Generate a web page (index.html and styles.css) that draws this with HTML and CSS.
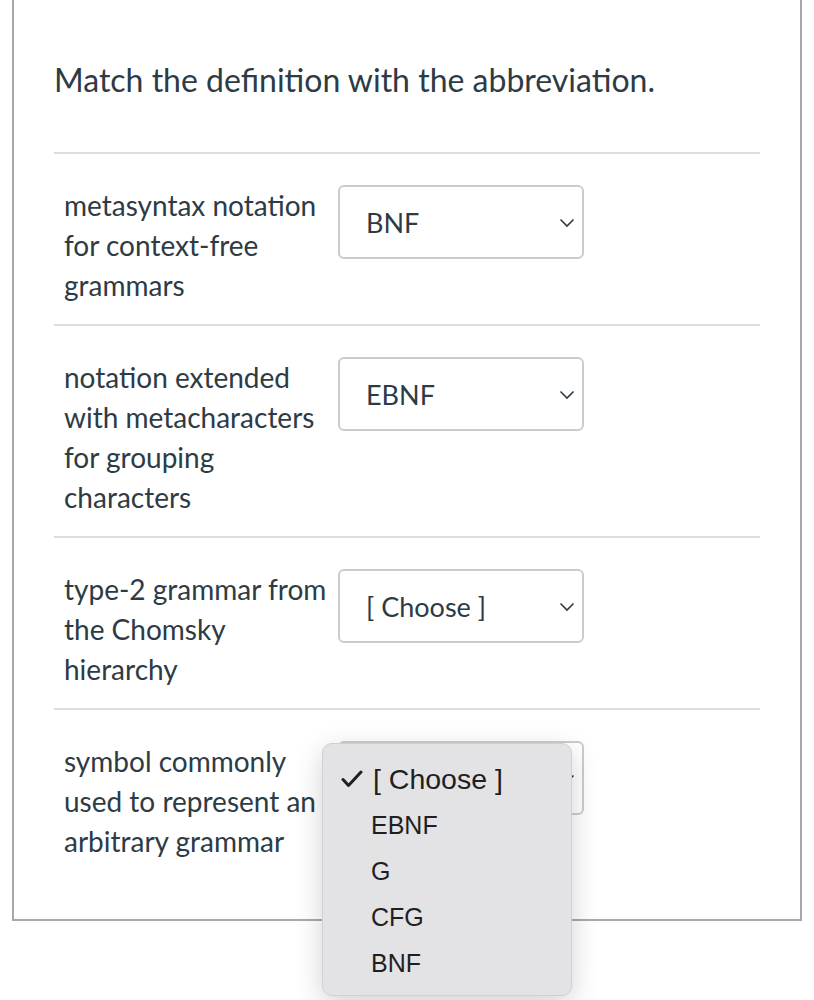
FILE: index.html
```html
<!DOCTYPE html>
<html lang="en">
<head>
    <meta charset="UTF-8">
    <meta name="viewport" content="width=device-width, initial-scale=1.0">
    <title>Matching Question</title>
    <link rel="stylesheet" href="styles.css">
</head>
<body>
    <div class="question">
        <div class="question-text">Match the definition with the abbreviation.</div>

        <div class="answers">
            <div class="answer">
                <div class="answer-label">metasyntax notation for context-free grammars</div>
                <div class="answer-select">
                    <span>BNF</span>
                    <svg class="chevron" width="16" height="10" viewBox="0 0 16 10" fill="none">
                        <path d="M1.5 1.5L8 8L14.5 1.5" stroke="#2D3B45" stroke-width="1.6"/>
                    </svg>
                </div>
            </div>

            <div class="answer">
                <div class="answer-label">notation extended with metacharacters for grouping characters</div>
                <div class="answer-select">
                    <span>EBNF</span>
                    <svg class="chevron" width="16" height="10" viewBox="0 0 16 10" fill="none">
                        <path d="M1.5 1.5L8 8L14.5 1.5" stroke="#2D3B45" stroke-width="1.6"/>
                    </svg>
                </div>
            </div>

            <div class="answer">
                <div class="answer-label">type-2 grammar from the Chomsky hierarchy</div>
                <div class="answer-select">
                    <span>[ Choose ]</span>
                    <svg class="chevron" width="16" height="10" viewBox="0 0 16 10" fill="none">
                        <path d="M1.5 1.5L8 8L14.5 1.5" stroke="#2D3B45" stroke-width="1.6"/>
                    </svg>
                </div>
            </div>

            <div class="answer">
                <div class="answer-label">symbol commonly used to represent an arbitrary grammar</div>
                <div class="answer-select">
                    <span>[ Choose ]</span>
                    <svg class="chevron" width="16" height="10" viewBox="0 0 16 10" fill="none">
                        <path d="M1.5 1.5L8 8L14.5 1.5" stroke="#2D3B45" stroke-width="1.6"/>
                    </svg>

                    <ul class="menu">
                        <li class="selected">
                            <svg class="check" width="22" height="18" viewBox="0 0 22 18" fill="none">
                                <path d="M2 9.5L7.5 15.5L20 2" stroke="#1F1F1F" stroke-width="3" stroke-linecap="round" stroke-linejoin="round"/>
                            </svg>
                            [ Choose ]
                        </li>
                        <li>EBNF</li>
                        <li>G</li>
                        <li>CFG</li>
                        <li>BNF</li>
                    </ul>
                </div>
            </div>
        </div>
    </div>
</body>
</html>
```

FILE: styles.css
```css
body {
    font-family: 'Lato', 'Noto Sans', sans-serif;
    margin: 0;
    padding: 0;
    min-height: 100vh;
    background: white;
    color: #2D3B45;
}

.question {
    width: 706px;
    margin-left: 12px;
    padding: 60px 40px 39px 40px;
    border: 2px solid #A9A9A9;
    border-top: none;
}

.question-text {
    font-size: 32px;
    line-height: 40px;
    margin-bottom: 52px;
}

.answer {
    display: flex;
    gap: 6px;
    align-items: flex-start;
    padding: 31px 10px 19px 10px;
    border-top: 2px solid #DDDDDD;
}

.answer-label {
    width: 268px;
    font-size: 28px;
    line-height: 40px;
}

.answer-select {
    position: relative;
    box-sizing: border-box;
    width: 246px;
    height: 74px;
    padding: 0 7px 0 26px;
    display: flex;
    align-items: center;
    justify-content: space-between;
    border: 2px solid #CCCCCC;
    border-radius: 6px;
    font-size: 27px;
}

.chevron {
    margin-top: 2px;
}

.menu {
    position: absolute;
    left: -18px;
    top: 0;
    width: 248px;
    margin: 0;
    padding: 12px 0 9px 0;
    list-style: none;
    background: #E3E3E5;
    border: 1px solid #D0D0D2;
    border-radius: 10px;
    box-shadow: 0 8px 28px rgba(0, 0, 0, 0.18);
    font-family: 'Liberation Sans', Arial, sans-serif;
    font-size: 25px;
    color: #1F1F1F;
}

.menu li {
    height: 46px;
    line-height: 46px;
    padding-left: 48px;
    position: relative;
}

.menu li.selected {
    padding-left: 50px;
    font-size: 28.5px;
}

.check {
    position: absolute;
    left: 18px;
    top: 14px;
}
```
